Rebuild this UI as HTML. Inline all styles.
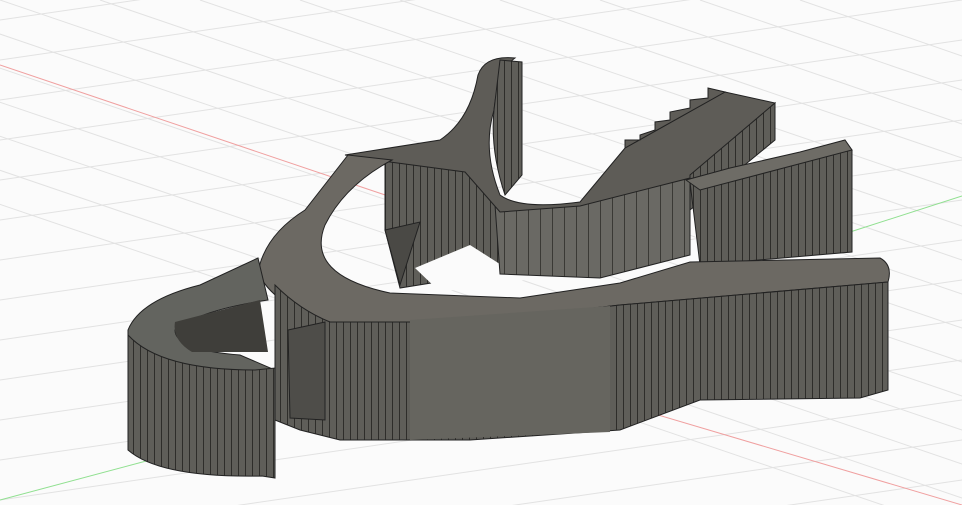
<!DOCTYPE html>
<html><head><style>html,body{margin:0;padding:0;background:#fff;overflow:hidden;width:962px;height:505px}svg{display:block}</style></head>
<body>
<svg width="962" height="505" viewBox="0 0 962 505" xmlns="http://www.w3.org/2000/svg">
<defs>
<pattern id="st" width="7" height="10" patternUnits="userSpaceOnUse"><rect width="7" height="10" fill="#5f5e59"/><rect width="1" height="10" fill="#2e2d2a"/></pattern>
<pattern id="st2" width="12" height="10" patternUnits="userSpaceOnUse"><rect width="12" height="10" fill="#6a6964"/><rect width="1" height="10" fill="#3a3935"/></pattern>
</defs>
<rect width="962" height="505" fill="#fbfbfb"/>
<g stroke="#e2e2e2" stroke-width="1">
<path d="M0 20 L962 -120 M0 60 L962 -80 M0 100 L962 -40 M0 140 L962 0 M0 180 L962 40 M0 220 L962 80 M0 260 L962 120 M0 300 L962 160 M0 340 L962 200 M0 380 L962 240 M0 420 L962 280 M0 460 L962 320 M0 500 L962 360 M0 540 L962 400 M0 580 L962 440 M0 620 L962 480 M0 660 L962 520 M0 700 L962 560"/>
<path d="M-300 0 L962 430 M-200 0 L962 396 M-100 0 L962 362 M0 0 L962 328 M100 0 L962 294 M200 0 L962 260 M300 0 L962 226 M400 0 L962 192 M500 0 L962 158 M600 0 L962 124 M700 0 L962 90 M800 0 L962 56 M-400 0 L962 464 M-500 0 L962 498 M-600 0 L962 532"/>
</g>
<line x1="0" y1="65" x2="400" y2="200" stroke="#f0a0a0"/>
<line x1="540" y1="380" x2="962" y2="505" stroke="#f0a0a0"/>
<line x1="850" y1="232" x2="962" y2="196" stroke="#90e090"/>
<line x1="0" y1="500" x2="150" y2="460" stroke="#90e090"/>
<path d="M385 160 L465 168 L500 212 L500 272 L400 288 L385 230 Z" fill="url(#st)" stroke="#222"/>
<path d="M385 230 L420 222 L400 285 Z" fill="#4a4945" stroke="#222"/>
<path d="M415 268 L470 245 L525 280 L440 292 Z" fill="#fbfbfb"/>
<path d="M495 205 L580 205 L690 178 L690 255 L600 278 L500 274 Z" fill="url(#st2)" stroke="#222"/>
<path d="M345 155 L440 140 Q470 120 478 75 Q485 55 515 58 Q498 70 494 110 Q482 150 500 195 Q520 210 580 202 L625 148 L725 92 L775 103 L690 178 L580 206 L500 212 L465 172 L390 162 Z" fill="#5e5c57" stroke="#222"/>
<path d="M625 148 L625 140 L640 140 L640 135 L655 130 L655 122 L670 120 L670 112 L690 108 L690 100 L708 98 L708 88 L725 92 Z" fill="#5e5c57" stroke="#222"/>
<path d="M500 60 L522 62 L522 175 L505 195 Q490 150 494 110 Z" fill="url(#st)" stroke="#222"/>
<path d="M690 175 L775 103 L775 140 L690 210 Z" fill="url(#st)" stroke="#222"/>
<path d="M690 182 L840 142 L852 150 L852 252 L700 265 Z" fill="url(#st)" stroke="#222"/>
<path d="M686 180 L730 168 L800 152 L845 140 L852 150 L700 190 Z" fill="#6e6c66" stroke="#222"/>
<path d="M258 272 Q265 235 305 210 L348 155 L392 160 Q345 185 325 225 Q305 275 390 293 L520 298 L620 283 L690 262 L880 258 Q893 265 888 282 L620 305 L470 322 L330 322 Q272 305 258 272 Z" fill="#6c6963" stroke="#222"/>
<path d="M128 330 Q140 300 200 285 L258 258 L268 300 Q200 310 175 330 Q175 350 240 355 L275 370 L260 378 Q170 372 128 345 Z" fill="#63645f" stroke="#222"/>
<path d="M175 322 L260 300 L268 352 L192 352 Q172 340 175 322 Z" fill="#3f3e3a"/>
<path d="M128 335 Q160 370 255 370 L275 368 L275 478 L262 476 Q160 478 128 450 Z" fill="url(#st)" stroke="#222"/>
<path d="M275 285 Q300 310 330 322 L470 322 L620 305 L888 282 L888 390 L860 398 L700 400 L620 430 L470 440 L340 440 L300 430 L275 420 Z" fill="url(#st)" stroke="#222"/>
<path d="M410 320 L610 306 L610 432 L410 440 Z" fill="#66655f"/>
<path d="M288 330 L325 322 L325 420 L290 418 Z" fill="#4e4d49" stroke="#222"/>
</svg>
</body></html>
